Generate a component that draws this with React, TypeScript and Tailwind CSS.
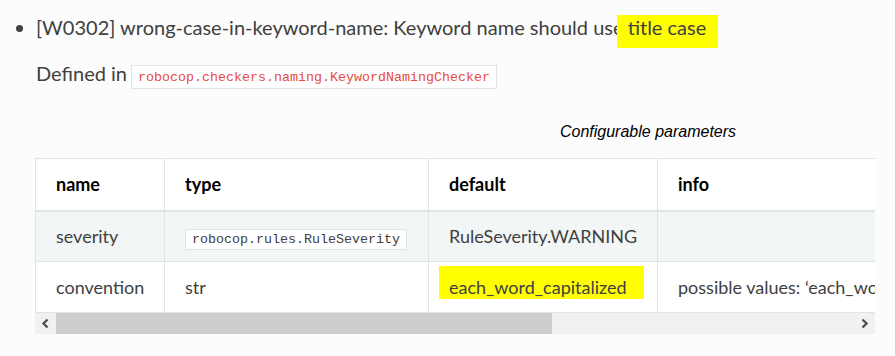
import React from 'react'

const lato = { fontFamily: 'Lato, "Noto Sans", sans-serif' }
const mono = { fontFamily: '"Liberation Mono", monospace' }

function Chevron({ dir }: { dir: 'left' | 'right' }) {
  return (
    <svg width="9" height="11" viewBox="0 0 9 11" className="text-[#505050]">
      {dir === 'left' ? (
        <path d="M6.5 1.5 L2.5 5.5 L6.5 9.5" fill="none" stroke="currentColor" strokeWidth="2.4" />
      ) : (
        <path d="M2.5 1.5 L6.5 5.5 L2.5 9.5" fill="none" stroke="currentColor" strokeWidth="2.4" />
      )}
    </svg>
  )
}

const rows = [
  { name: 'severity', type: 'robocop.rules.RuleSeverity', def: 'RuleSeverity.WARNING', info: '', code: true, mark: false },
  { name: 'convention', type: 'str', def: 'each_word_capitalized', info: "possible values: \u2018each_word_capitalized\u2019 (default) or \u2018first_word_capitalized\u2019", code: false, mark: true },
]

export default function App() {
  return (
    <div className="w-[895px] h-[356px] overflow-hidden bg-[#fcfcfc] text-[#404040]" style={lato}>
      <ul className="list-disc pl-[36px] pt-[12px] text-[20px]">
        <li className="leading-[30px]">
          [W0302] wrong-case-in-keyword-name: Keyword name should use{' '}
          <span className="inline-block bg-[#ffff00] -ml-[12px] pl-[11px] pr-[12px] leading-[24px] pb-[9px]">title case</span>
        </li>
      </ul>
      <div className="pl-[36px] mt-[13px] text-[20px] leading-[24px]">
        Defined in{' '}
        <code
          className="inline-block -ml-[1px] bg-white border border-[#e1e4e5] px-[6px] pt-[4px] pb-[2px] text-[13.33px] leading-[16px] text-[#e74c3c] align-baseline"
          style={mono}
        >
          robocop.checkers.naming.KeywordNamingChecker
        </code>
      </div>

      <div className="ml-[35px] w-[840px] mt-[33px] overflow-hidden">
        <div className="w-[1226px]">
          <div
            className="text-center italic text-[16px] leading-[20px] text-black h-[36px]"
            style={{ fontFamily: '"Liberation Sans", Arial, sans-serif' }}
          >
            Configurable parameters
          </div>
          <table className="table-fixed border-collapse w-[1226px] text-[18px]">
            <colgroup>
              <col className="w-[129px]" />
              <col className="w-[264px]" />
              <col className="w-[229px]" />
              <col />
            </colgroup>
            <thead>
              <tr className="bg-white text-black">
                <th className="h-[52px] border border-[#e1e4e5] border-b-2 text-left pl-[20px] font-bold">name</th>
                <th className="border border-[#e1e4e5] border-b-2 text-left pl-[20px] font-bold">type</th>
                <th className="border border-[#e1e4e5] border-b-2 text-left pl-[20px] font-bold">default</th>
                <th className="border border-[#e1e4e5] border-b-2 text-left pl-[20px] font-bold">info</th>
              </tr>
            </thead>
            <tbody>
              {rows.map((r, i) => (
                <tr key={r.name} className={i === 0 ? 'bg-[#f3f6f6]' : 'bg-white'}>
                  <td className="h-[51px] border border-[#e1e4e5] pl-[20px]">{r.name}</td>
                  <td className="border border-[#e1e4e5] pl-[20px]">
                    {r.code ? (
                      <code
                        className="bg-white border border-[#e1e4e5] px-[6px] py-[2px] text-[13.33px] leading-[16px]"
                        style={mono}
                      >
                        {r.type}
                      </code>
                    ) : (
                      r.type
                    )}
                  </td>
                  <td className="border border-[#e1e4e5] pl-[20px]">
                    {r.mark ? (
                      <span className="inline-block bg-[#ffff00] -ml-[10px] pl-[10px] pr-[17px] leading-[22px] pt-[10px] pb-[1px] -mt-[10px] -mb-[1px]">
                        {r.def}
                      </span>
                    ) : (
                      r.def
                    )}
                  </td>
                  <td className="border border-[#e1e4e5] pl-[20px] whitespace-nowrap overflow-hidden">{r.info}</td>
                </tr>
              ))}
            </tbody>
          </table>
        </div>
        {/* horizontal scrollbar */}
        <div className="flex h-[21px] bg-[#f1f1f1]">
          <div className="w-[21px] flex items-center justify-center">
            <Chevron dir="left" />
          </div>
          <div className="w-[496px] bg-[#cdcdcd]" />
          <div className="flex-1" />
          <div className="w-[21px] flex items-center justify-center">
            <Chevron dir="right" />
          </div>
        </div>
      </div>
    </div>
  )
}
